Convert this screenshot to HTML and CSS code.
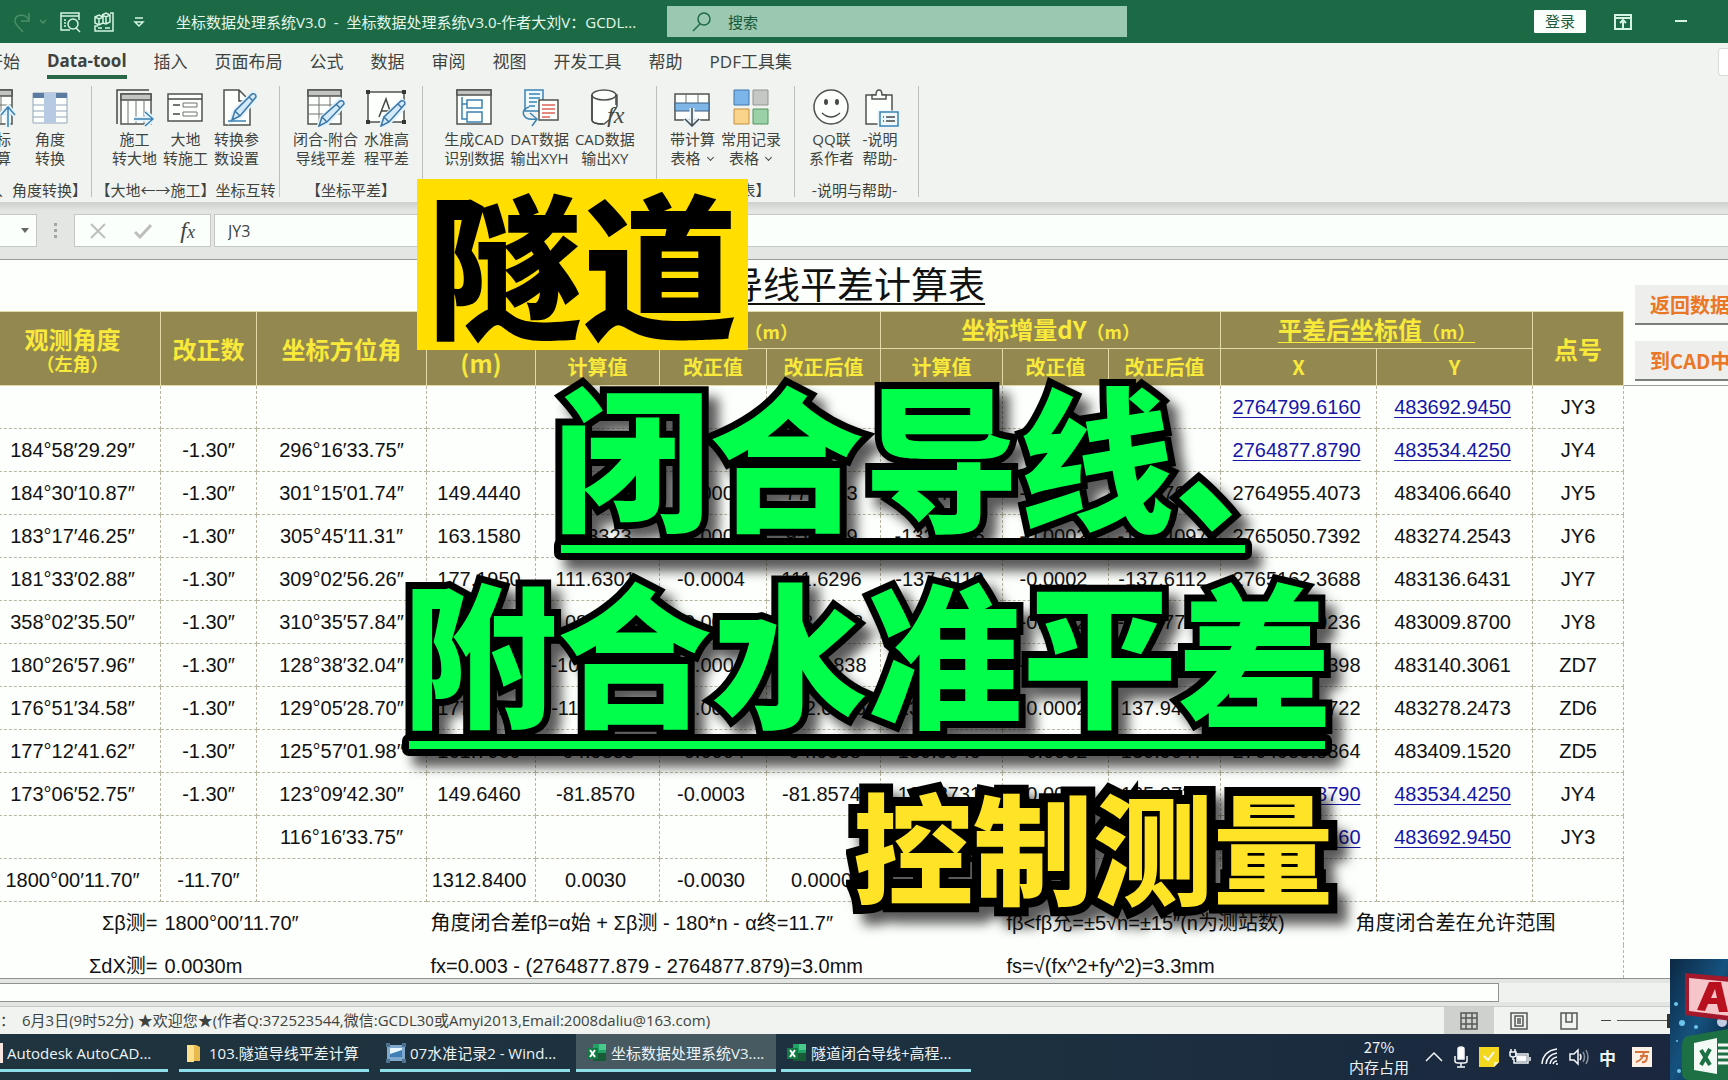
FILE: index.html
```html
<!DOCTYPE html>
<html lang="zh-CN">
<head>
  <meta charset="utf-8">
  <title>坐标数据处理系统V3.0</title>
  <link rel="stylesheet" href="styles.css">
</head>
<body>
  <header class="titlebar">
    <div class="quick">
      <svg class="faded" width="20" height="22" viewBox="0 0 20 22"><path d="M17 2v8H9M17 9C13 2 3 3 3 10c0 4 4 6 8 11"/></svg>
      <svg class="faded" width="8" height="8" viewBox="0 0 8 8"><path d="M1 2l3 3 3-3"/></svg>
      <svg width="22" height="22" viewBox="0 0 22 22"><path d="M20 9V2H2v17h9M2 5h18M5 9h2M5 12h2M5 15h2M17 17l4 4"/><circle cx="14" cy="13" r="5"/></svg>
      <svg width="22" height="22" viewBox="0 0 22 22"><path d="M5 15H2v5h18V2h-3M2 6l4-2 4 2v6l-4 2-4-2zM2 6l4 2 4-2M6 8v6M9 4l4-2 4 2v7l-4 2-3-1M9 4l4 2 4-2M13 6v7M5 17h4M12 17h5"/></svg>
      <svg class="more" width="12" height="12" viewBox="0 0 12 12"><path d="M2 2h8M2 6l4 4 4-4z"/></svg>
    </div>
    <div class="doc-title">坐标数据处理系统V3.0&nbsp; -&nbsp; 坐标数据处理系统V3.0-作者大刘V：GCDL...</div>
    <label class="search">
      <svg width="20" height="20" viewBox="0 0 20 20"><circle cx="12" cy="7" r="6"/><path d="M8 12l-7 7"/></svg>
      <input type="text" placeholder="搜索" aria-label="搜索">
    </label>
    <div class="window-tools">
      <button class="login">登录</button>
      <button class="plain" aria-label="功能区显示选项"><svg width="18" height="16" viewBox="0 0 18 16"><path d="M1 1h16v14H1zM1 4h16M9 15V7M6 9l3-3 3 3"/></svg></button>
      <button class="plain" aria-label="最小化"><svg width="14" height="16" viewBox="0 0 14 16"><path d="M1 7h12"/></svg></button>
    </div>
  </header>

  <section class="ribbon">
    <nav class="tabs">
      <button class="tab cut">开始</button>
      <button class="tab active">Data-tool</button>
      <button class="tab">插入</button>
      <button class="tab">页面布局</button>
      <button class="tab">公式</button>
      <button class="tab">数据</button>
      <button class="tab">审阅</button>
      <button class="tab">视图</button>
      <button class="tab">开发工具</button>
      <button class="tab">帮助</button>
      <button class="tab">PDF工具集</button>
      <span class="share"></span>
    </nav>
    <div class="groups">
      <div class="group g-angle">
        <div class="tools">
          <button class="tool"><svg width="40" height="38" viewBox="0 0 40 38"><path class="paper" d="M4 1h32v34H4z"/><path class="head" d="M4 1h32v6H4z"/><path class="thin" d="M14 7v28M25 7v28M4 16h32M4 25h32"/><path class="halo" d="M32 38V18M25 26l7-8 7 8"/><path class="blue" d="M32 38V18M25 26l7-8 7 8"/></svg>坐标<br>计算</button>
          <button class="tool"><svg width="40" height="38" viewBox="0 0 40 38"><path class="paper light" d="M3 4h34v30H3z"/><path d="M3 4h34v5H3z" fill="#5c7ba0"/><path class="light" d="M3 16h34M3 22h34M3 28h34"/><path d="M14 4h12v30H14z" fill="#b6cae4"/></svg>角度<br>转换</button>
        </div>
        <div class="group-name">【坐标计算、角度转换】</div>
      </div>
      <div class="group g-swap">
        <div class="tools">
          <button class="tool"><svg width="40" height="38" viewBox="0 0 40 38"><path class="line" d="M3 35V1h32"/><path class="paper" d="M7 5h30v30H7z"/><path class="head" d="M7 5h30v6H7z"/><path class="thin" d="M14 11v24M22 11v24M30 11v24"/><path class="halo" d="M20 30h18M31 23l8 7-8 8"/><path class="blue" d="M20 30h18M31 23l8 7-8 7"/></svg>施工<br>转大地</button>
          <button class="tool"><svg width="40" height="38" viewBox="0 0 40 38"><path class="paper" d="M3 5h34v27H3z"/><path class="line" d="M3 10h34M8 16h7M8 25h7"/><path class="thin" d="M18 14h14v4H18zM18 23h14v4H18z"/></svg>大地<br>转施工</button>
          <button class="tool"><svg width="40" height="38" viewBox="0 0 40 38"><path class="paper" d="M7 1h15l11 11v24H7z"/><path class="line" d="M22 1v11h11"/><path class="halo" d="M15 31l3-9L36 4l4 4-17 19z"/><path class="pen" d="M15 31l3-9L35 5q4-1 4 3L23 27zM18 22l5 5M32 8l4 4"/><path class="blue" d="M11 32h18"/></svg>转换参<br>数设置</button>
        </div>
        <div class="group-name">【大地←→施工】坐标互转</div>
      </div>
      <div class="group g-adjust">
        <div class="tools">
          <button class="tool"><svg width="40" height="38" viewBox="0 0 40 38"><path class="paper" d="M3 1h33v34H3z"/><path class="head" d="M3 1h33v6H3z"/><path class="thin" d="M14 7v28M25 7v28M3 16h33M3 25h33"/><path class="halo" d="M14 38l3-9L35 11l4 4-17 19z"/><path class="pen" d="M14 37l3-9L35 12q4-1 4 3L22 33zM17 28l5 5M31 15l4 4"/></svg>闭合-附合<br>导线平差</button>
          <button class="tool"><svg width="40" height="38" viewBox="0 0 40 38"><path class="paper" d="M2 3h36v30H2z"/><path class="line" d="M13 28l7-18 6 18M15 22h9"/><path class="dots" d="M0 1h4v4H0zM36 1h4v4h-4zM0 31h4v4H0zM36 31h4v4h-4z"/><path class="halo" d="M15 38l3-9L36 12l4 4-17 17z"/><path class="pen" d="M15 37l3-9L35 12q4-1 4 3L23 33zM18 28l5 5M32 15l4 4"/></svg>水准高<br>程平差</button>
        </div>
        <div class="group-name">【坐标平差】</div>
      </div>
      <div class="group g-cad">
        <div class="tools">
          <button class="tool"><svg width="40" height="38" viewBox="0 0 40 38"><path class="paper" d="M3 1h34v34H3z"/><path class="head" d="M3 1h34v5H3z"/><path class="blue" d="M8 8v22h5M8 15h5M13 11h15v8H13zM13 23h15v10H13z"/></svg>生成CAD<br>识别数据</button>
          <button class="tool"><svg width="40" height="38" viewBox="0 0 40 38"><path class="pale" d="M5 1h18v21H5z"/><path class="blue" d="M9 5h11M9 9h11M9 13h8M9 17h6"/><path class="paper" d="M19 11h19v20H19z"/><path class="red" d="M22 16h13M22 20h13M22 24h13M22 28h8"/><path class="curve" d="M9 18c-9 2-8 14 7 12M10 24l7 6-5 7"/></svg>DAT数据<br>输出XYH</button>
          <button class="tool"><svg width="40" height="38" viewBox="0 0 40 38"><path class="paper" d="M7 6v25c0 3 6 4 12 4l5-4 8-14V6z" stroke="none"/><ellipse class="paper" cx="19" cy="6" rx="12" ry="5"/><path class="line" d="M7 6v25c0 3 5 4 11 4M31 6v10"/><text x="22" y="34" class="fx-icon">fx</text></svg>CAD数据<br>输出XY</button>
        </div>
        <div class="group-name">【CAD数据】</div>
      </div>
      <div class="group g-forms">
        <div class="tools">
          <button class="tool"><svg width="40" height="38" viewBox="0 0 40 38"><path class="paper" d="M3 5h34v26H3z"/><path class="thin" d="M14 5v9M26 5v9"/><path d="M3 14h34v8H3z" fill="#7fb6e8" stroke="#3c5f80"/><path class="halo" d="M20 19v17M13 30l7 7 7-7"/><path class="line" d="M20 19v18M13 30l7 7 7-7"/></svg>带计算<br>表格<i class="drop"></i></button>
          <button class="tool"><svg width="40" height="38" viewBox="0 0 40 38"><path d="M3 1h15v15H3z" fill="#7cb5ea" stroke="#3f77ab"/><path d="M22 1h15v15H22z" fill="#c5c7c5" stroke="#939593"/><path d="M3 20h15v15H3z" fill="#fad48a" stroke="#c58f3e"/><path d="M22 20h15v15H22z" fill="#9bd1a7" stroke="#55955f"/></svg>常用记录<br>表格<i class="drop"></i></button>
        </div>
        <div class="group-name">【常用报表】</div>
      </div>
      <div class="group g-help">
        <div class="tools">
          <button class="tool"><svg width="40" height="38" viewBox="0 0 40 38"><circle class="paper" cx="20" cy="18" r="17"/><ellipse cx="15" cy="13" rx="2" ry="3"/><ellipse cx="26" cy="13" rx="2" ry="3"/><path class="line" d="M11 24q9 8 18 0"/></svg>QQ联<br>系作者</button>
          <button class="tool"><svg width="40" height="38" viewBox="0 0 40 38"><path class="paper" d="M6 6h26v29H6z"/><path class="paper" d="M12 6h4q0-5 3-5t3 5h4v4H12z"/><path class="halo" d="M20 24h18v13H20z"/><path class="pale" d="M20 23h18v14H20z"/><path class="line" d="M23 28h1M26 28h9M23 32h1M26 32h9"/></svg>-说明<br>帮助-</button>
        </div>
        <div class="group-name">-说明与帮助-</div>
      </div>
    </div>
  </section>

  <section class="formula-bar">
    <div class="name-box"><i></i></div>
    <span class="grip"></span>
    <div class="fx-box">
      <svg width="16" height="16" viewBox="0 0 16 16"><path d="M1 1l14 14M15 1L1 15"/></svg>
      <svg width="18" height="16" viewBox="0 0 18 16"><path class="tick" d="M1 9l5 5L17 2"/></svg>
      <em>f<small>x</small></em>
    </div>
    <input class="formula" type="text" value="JY3" aria-label="编辑栏">
  </section>

  <main class="sheet">
    <div class="sheet-main">
      <h1>附合导线平差计算表</h1>
      <table class="calc">
        <colgroup>
          <col class="w176"><col class="w96"><col class="w170"><col class="w109"><col class="w124"><col class="w107"><col class="w114"><col class="w122"><col class="w106"><col class="w112"><col class="w156"><col class="w156"><col class="w91">
        </colgroup>
        <thead>
          <tr>
            <th rowspan="2">观测角度<small>（左角）</small></th>
            <th rowspan="2">改正数</th>
            <th rowspan="2">坐标方位角</th>
            <th rowspan="2">边长<br>(m)</th>
            <th colspan="3">坐标增量dX<span>（m）</span></th>
            <th colspan="3">坐标增量dY<span>（m）</span></th>
            <th colspan="2"><u>平差后坐标值<span>（m）</span></u></th>
            <th rowspan="2">点号</th>
          </tr>
          <tr class="sub">
            <th>计算值</th><th>改正值</th><th>改正后值</th>
            <th>计算值</th><th>改正值</th><th>改正后值</th>
            <th>X</th><th>Y</th>
          </tr>
        </thead>
        <tbody>
          <tr><td></td><td></td><td></td><td></td><td></td><td></td><td></td><td></td><td></td><td></td><td><a href="#">2764799.6160</a></td><td><a href="#">483692.9450</a></td><td>JY3</td></tr>
          <tr><td>184°58′29.29″</td><td>-1.30″</td><td>296°16′33.75″</td><td></td><td></td><td></td><td></td><td></td><td></td><td></td><td><a href="#">2764877.8790</a></td><td><a href="#">483534.4250</a></td><td>JY4</td></tr>
          <tr><td>184°30′10.87″</td><td>-1.30″</td><td>301°15′01.74″</td><td>149.4440</td><td>77.5287</td><td>-0.0003</td><td>77.5283</td><td>-127.7608</td><td>-0.0002</td><td>-127.7610</td><td>2764955.4073</td><td>483406.6640</td><td>JY5</td></tr>
          <tr><td>183°17′46.25″</td><td>-1.30″</td><td>305°45′11.31″</td><td>163.1580</td><td>95.3323</td><td>-0.0004</td><td>95.3319</td><td>-132.4096</td><td>-0.0002</td><td>-132.4097</td><td>2765050.7392</td><td>483274.2543</td><td>JY6</td></tr>
          <tr><td>181°33′02.88″</td><td>-1.30″</td><td>309°02′56.26″</td><td>177.1950</td><td>111.6301</td><td>-0.0004</td><td>111.6296</td><td>-137.6110</td><td>-0.0002</td><td>-137.6112</td><td>2765162.3688</td><td>483136.6431</td><td>JY7</td></tr>
          <tr><td>358°02′35.50″</td><td>-1.30″</td><td>310°35′57.84″</td><td>166.9650</td><td>108.6552</td><td>-0.0004</td><td>108.6548</td><td>-126.7729</td><td>-0.0002</td><td>-126.7731</td><td>2765271.0236</td><td>483009.8700</td><td>JY8</td></tr>
          <tr><td>180°26′57.96″</td><td>-1.30″</td><td>128°38′32.04″</td><td>166.9380</td><td>-104.1834</td><td>-0.0004</td><td>-104.1838</td><td>130.4363</td><td>-0.0002</td><td>130.4361</td><td>2765166.8398</td><td>483140.3061</td><td>ZD7</td></tr>
          <tr><td>176°51′34.58″</td><td>-1.30″</td><td>129°05′28.70″</td><td>177.7320</td><td>-112.0672</td><td>-0.0004</td><td>-112.0676</td><td>137.9414</td><td>-0.0002</td><td>137.9412</td><td>2765054.7722</td><td>483278.2473</td><td>ZD6</td></tr>
          <tr><td>177°12′41.62″</td><td>-1.30″</td><td>125°57′01.98″</td><td>161.7060</td><td>-94.9355</td><td>-0.0004</td><td>-94.9358</td><td>130.9049</td><td>-0.0002</td><td>130.9047</td><td>2764959.8364</td><td>483409.1520</td><td>ZD5</td></tr>
          <tr><td>173°06′52.75″</td><td>-1.30″</td><td>123°09′42.30″</td><td>149.6460</td><td>-81.8570</td><td>-0.0003</td><td>-81.8574</td><td>125.2731</td><td>-0.0002</td><td>125.2730</td><td><a href="#">2764877.8790</a></td><td><a href="#">483534.4250</a></td><td>JY4</td></tr>
          <tr><td></td><td></td><td>116°16′33.75″</td><td></td><td></td><td></td><td></td><td></td><td></td><td></td><td><a href="#">2764799.6160</a></td><td><a href="#">483692.9450</a></td><td>JY3</td></tr>
          <tr><td>1800°00′11.70″</td><td>-11.70″</td><td></td><td>1312.8400</td><td>0.0030</td><td>-0.0030</td><td>0.0000</td><td></td><td></td><td></td><td></td><td></td><td></td></tr>
        </tbody>
        <tfoot>
          <tr><td class="label">Σβ测=</td><td colspan="2">1800°00′11.70″</td><td colspan="5">角度闭合差fβ=α始 + Σβ测 - 180*n - α终=11.7″</td><td colspan="2">fβ&lt;fβ允=±5√n=±15″(n为测站数)</td><td class="verdict" colspan="3">角度闭合差在允许范围</td></tr>
          <tr><td class="label">ΣdX测=</td><td colspan="2">0.0030m</td><td colspan="5">fx=0.003 - (2764877.879 - 2764877.879)=3.0mm</td><td colspan="2">fs=√(fx^2+fy^2)=3.3mm</td><td colspan="3"></td></tr>
        </tfoot>
      </table>
    </div>
    <aside class="macros">
      <button>返回数据表</button>
      <button>到CAD中绘图</button>
    </aside>
  </main>

  <div class="scroll-row"><div class="thumb"></div><div class="track"></div></div>

  <footer class="statusbar">
    <div class="message"><span>时间：</span>6月3日(9时52分) ★欢迎您★(作者Q:372523544,微信:GCDL30或Amyi2013,Email:2008daliu@163.com)</div>
    <div class="views">
      <button class="on" aria-label="普通"><svg width="18" height="18" viewBox="0 0 18 18"><path d="M1 1h16v16H1zM6 1v16M12 1v16M1 6h16M1 12h16"/></svg></button>
      <button aria-label="页面布局"><svg width="18" height="18" viewBox="0 0 18 18"><path d="M1 1h16v16H1zM5 4h8v10H5zM7 7h4M7 9h4M7 11h4"/></svg></button>
      <button aria-label="分页预览"><svg width="18" height="18" viewBox="0 0 18 18"><path d="M1 1h16v16H1zM6 1v9h6V1"/></svg></button>
    </div>
    <div class="zoom"><i></i><b></b></div>
  </footer>

  <div class="taskbar">
    <div class="tasks">
      <button class="task first"><i></i>Autodesk AutoCAD...</button>
      <button class="task"><svg width="18" height="20" viewBox="0 0 18 20"><path d="M2 2h9l4 2v14H2z" fill="#e8b94c"/><path d="M2 2h7v17H2z" fill="#ffe08a"/></svg><span class="folder">103.隧道导线平差计算</span></button>
      <button class="task"><svg width="20" height="20" viewBox="0 0 20 20"><path d="M1 2h18v16H1z" fill="#7fa9cc"/><path d="M4 5h12v9H4z" fill="#e9f6ff"/><path d="M4 11l12-4v7H4z" fill="#3f7fb5"/><path d="M0 0h4v4H0zM16 0h4v4h-4zM0 16h4v4H0zM16 16h4v4h-4z" fill="#4d7191"/></svg>07水准记录2 - Wind...</button>
      <button class="task current"><svg width="20" height="20" viewBox="0 0 20 20"><path d="M6 1h13v17H6z" fill="#21a366"/><path d="M12 1h7v6h-7z" fill="#4bc88c"/><path d="M6 10h13v8H6z" fill="#185c37"/><path d="M0 5h11v11H0z" fill="#107c41"/><path d="M3 7l5 7M8 7l-5 7" stroke="#fff" stroke-width="2"/></svg>坐标数据处理系统V3....</button>
      <button class="task"><svg width="20" height="20" viewBox="0 0 20 20"><path d="M6 1h13v17H6z" fill="#21a366"/><path d="M12 1h7v6h-7z" fill="#4bc88c"/><path d="M6 10h13v8H6z" fill="#185c37"/><path d="M0 5h11v11H0z" fill="#107c41"/><path d="M3 7l5 7M8 7l-5 7" stroke="#fff" stroke-width="2"/></svg>隧道闭合导线+高程...</button>
    </div>
    <div class="tray">
      <div class="memory">27%<br>内存占用</div>
      <svg width="18" height="20" viewBox="0 0 18 20"><path d="M1 14l8-8 8 8"/></svg>
      <svg width="16" height="22" viewBox="0 0 16 22"><path d="M5 3q0-2 3-2t3 2v10H5z" fill="#fff"/><path d="M2 10v5q0 2 3 2h6q3 0 3-2v-5M8 17v4M4 21h8"/></svg>
      <svg width="20" height="20" viewBox="0 0 20 20"><path d="M0 0h20v15l-5 5H0z" fill="#f3d81f" stroke="none"/><path d="M15 20v-5h5z" fill="#fff7a8" stroke="none"/><path d="M5 9l4 4 6-8" stroke-width="2"/></svg>
      <svg width="22" height="18" viewBox="0 0 22 18"><path d="M6 6h13v9H5v-4"/><path d="M8 8h9v5H8z" fill="#fff"/><path d="M21 9v4M1 4h6v3q0 2-3 2t-3-2zM2 1v3M6 1v3M4 9v3"/></svg>
      <svg width="18" height="18" viewBox="0 0 18 18"><path d="M1 16Q2 3 16 1M5 16q1-9 11-11M9 16q1-6 7-7M12 16q1-3 4-3M15 16h2"/></svg>
      <svg width="20" height="18" viewBox="0 0 20 18"><path d="M1 6h4l4-4v14l-4-4H1zM11 6q2 3 0 6"/><path d="M14 4q3 5 0 10M17 2q4 7 0 14" opacity=".5"/></svg>
      <span class="ime">中</span>
      <svg width="20" height="20" viewBox="0 0 20 20"><path d="M0 0h20v20H0z" fill="#fdf1e6" stroke="none"/><path d="M3 5h14M12 5q-1 8-8 10M8 9h7q0 7-5 6" stroke="#d9723c" stroke-width="2"/></svg>
    </div>
  </div>

  <svg class="badge" width="58" height="121" viewBox="0 0 58 121">
    <defs><linearGradient id="night" x1="0" y1="0" x2="1" y2="1"><stop offset="0" stop-color="#0c2944"/><stop offset=".5" stop-color="#15527f"/><stop offset="1" stop-color="#061b30"/></linearGradient></defs>
    <path d="M0 0h58v121H0z" fill="url(#night)"/>
    <g fill="#6fc4ee"><circle cx="6" cy="45" r="2"/><circle cx="12" cy="64" r="3"/><circle cx="7" cy="82" r="1"/><circle cx="26" cy="68" r="2"/><circle cx="9" cy="112" r="2"/><circle cx="32" cy="117" r="2"/><circle cx="52" cy="63" r="5" fill="#c2cce0"/></g>
    <path d="M15 14l46 4v44l-46-6z" fill="#a3182a"/>
    <path d="M19 19l42 4v34l-42-5z" fill="#f5c5c9"/>
    <path d="M27 51l12-28h12l7 30h-9l-2-8H38l-3 7zM41 39h6l-2-9z" fill="#b8101f"/>
    <path d="M18 77l40-7v51H18q-6 0-6-7V86q0-8 6-9z" fill="#1d7044"/>
    <path d="M24 84l23-5v36l-23-4z" fill="#f3faf5"/>
    <path d="M31 91l9 15M40 90l-9 16" stroke="#1d7044" stroke-width="4"/>
    <path d="M48 86h10M48 92h10M48 98h10M48 104h10" stroke="#f3faf5" stroke-width="3"/>
  </svg>

  <div class="tag">隧道</div>
  <div class="caption caption-one">闭合导线、</div>
  <div class="caption caption-two">附合水准平差</div>
  <div class="caption caption-three">控制测量</div>
</body>
</html>
```

FILE: styles.css
```css
*,
*::after {
  box-sizing: border-box;
}

body {
  margin: 0;
  height: 100vh;
  display: flex;
  flex-direction: column;
  position: relative;
  overflow: hidden;
  background: #fdfffc;
  font-family: "Open Sans", "Noto Sans CJK SC", sans-serif;
  font-size: 15px;
  color: #3f4340;
}

button, input {
  font: inherit;
  color: inherit;
  border: none;
  background: none;
  padding: 0;
  margin: 0;
  white-space: nowrap;
}

svg {
  flex: none;
}

/* title bar */
.titlebar {
  height: 43px;
  flex: none;
  display: flex;
  align-items: center;
  background: #1c6a45;
  color: #e4f7ec;
}

.titlebar svg {
  fill: none;
  stroke: #d4f3e2;
  stroke-width: 2;
}

.quick {
  width: 176px;
  padding-left: 12px;
  display: flex;
  align-items: center;
  gap: 12px;
}

.titlebar .quick svg {
  stroke-width: 1.5;
}

.titlebar .quick .faded {
  stroke: #4b8f6d;
  margin-right: -5px;
}

.quick .faded + svg:not(.faded) {
  margin-left: 5px;
}

.quick .more {
  margin-left: 6px;
}

.doc-title {
  width: 491px;
  white-space: nowrap;
}

.search {
  width: 460px;
  height: 31px;
  padding-left: 25px;
  display: flex;
  align-items: center;
  gap: 16px;
  background: #9ac8b0;
}

.titlebar .search svg {
  stroke: #1c6a45;
  stroke-width: 1.5;
}

.search input {
  flex: 1;
}

.search input::placeholder {
  color: #15593a;
}

.window-tools {
  flex: 1;
  display: flex;
  justify-content: flex-end;
  align-items: center;
  gap: 28px;
  padding-right: 40px;
}

.window-tools svg {
  display: block;
}

.window-tools .plain + .plain {
  margin-left: 14px;
}

.login {
  width: 52px;
  height: 23px;
  line-height: 23px;
  background: #fafffc;
  color: #1c5a3d;
  border-radius: 1px;
}

/* ribbon */
.ribbon {
  height: 159px;
  flex: none;
  background: #f0f3ef;
}

.tabs {
  height: 43px;
  display: flex;
  gap: 27px;
  align-items: flex-start;
  overflow: hidden;
  font-size: 17px;
}

.tab {
  height: 36px;
  line-height: 38px;
}

.tab.cut {
  margin-left: -14px;
}

.tab.active {
  line-height: 36px;
  font-weight: bold;
  border-bottom: 4px solid #2a6648;
}

.share {
  width: 10px;
  height: 28px;
  margin: 5px 0 0 auto;
  background: #fff;
  border: 1px solid #d8dcd8;
  border-right: none;
  border-radius: 4px 0 0 4px;
}

.groups {
  display: flex;
  height: 111px;
}

.group {
  flex: none;
  display: flex;
  flex-direction: column;
  justify-content: space-between;
  align-items: center;
  border-right: 1px solid #bcbfbb;
}

.g-angle {
  width: 92px;
  align-items: flex-end;
  padding-right: 4px;
}

.g-angle .tools {
  gap: 14px;
  padding-right: 17px;
}

.g-swap { width: 188px; }
.g-adjust { width: 143px; }
.g-cad { width: 234px; }
.g-forms { width: 138px; }
.g-help { width: 124px; padding-right: 4px; }

.tools {
  display: flex;
  gap: 6px;
  padding-top: 3px;
}

.tool {
  min-width: 40px;
  line-height: 19px;
  text-align: center;
}

.tool svg {
  display: block;
  margin: 0 auto 3px;
  fill: #454845;
}

.tool .paper { fill: #fdfffd; stroke: #50534f; stroke-width: 1.5; }
.tool .light { stroke: #93a5b8; stroke-width: 1; }
.tool .head { fill: #c3c5c2; stroke: #50534f; stroke-width: 1.5; }
.tool .thin { fill: none; stroke: #70736f; }
.tool .line { fill: none; stroke: #454845; stroke-width: 1.5; }
.tool .halo { fill: none; stroke: #e3f3fc; stroke-width: 5; }
.tool .blue,
.tool .curve { fill: none; stroke: #3b82b3; stroke-width: 1.5; }
.tool .red { fill: none; stroke: #dc6358; stroke-width: 1.5; }
.tool .pen { fill: #d3eafa; stroke: #3b76a5; stroke-width: 1.5; }
.tool .pale { fill: #edf8ff; stroke: #3b82b3; stroke-width: 1.5; }
.tool .dots { fill: #353835; }

.fx-icon {
  font: italic 24px "Liberation Serif", serif;
}

.drop {
  display: inline-block;
  width: 5px;
  height: 5px;
  margin: 0 2px 4px 7px;
  border: solid #454845;
  border-width: 0 1px 1px 0;
  transform: rotate(45deg);
}

.group-name {
  height: 15px;
  line-height: 15px;
  white-space: nowrap;
  font-family: "Noto Sans CJK SC", sans-serif;
}

/* formula bar */
.formula-bar {
  height: 58px;
  flex: none;
  display: flex;
  align-items: center;
  background: linear-gradient(#cdd0cd, #e4e6e3 9px);
  border-bottom: 1px solid #9a9c99;
}

.name-box, .fx-box, .formula {
  height: 33px;
  background: #fbfffb;
  border: 1px solid #c4c7c3;
}

.name-box {
  width: 37px;
  border-left: none;
  display: flex;
  align-items: center;
  justify-content: flex-end;
  padding-right: 7px;
}

.name-box i {
  border: 4px solid transparent;
  border-top: 5px solid #666;
  border-bottom: none;
}

.grip {
  height: 15px;
  margin: 0 17px;
  border-left: 3px dotted #a3a5a2;
}

.fx-box {
  width: 137px;
  margin-right: 3px;
  padding: 0 15px;
  display: flex;
  align-items: center;
  justify-content: space-between;
}

.fx-box svg {
  fill: none;
  stroke: #bdbfbc;
  stroke-width: 2;
}

.fx-box .tick {
  stroke-width: 3;
}

.fx-box em {
  font: italic 24px "Liberation Serif", serif;
  color: #444;
}

.fx-box small {
  font-size: 18px;
}

.formula {
  flex: 1;
  padding-left: 13px;
  border-right: none;
  font-size: 16px;
}

/* worksheet */
.sheet {
  flex: 1;
  min-height: 0;
  overflow: hidden;
  display: flex;
  font-family: "Liberation Sans", "Noto Sans CJK SC", sans-serif;
  font-size: 20px;
  color: #111;
}

.sheet-main {
  flex: none;
  margin-left: -16px;
}

h1 {
  margin: 0;
  height: 51px;
  line-height: 47px;
  padding-right: 639px;
  text-align: right;
  font-family: "Noto Sans CJK SC", sans-serif;
  font-size: 37px;
  font-weight: normal;
  text-decoration: underline;
  text-decoration-thickness: 2px;
  text-underline-offset: 4px;
}

.calc {
  width: 1639px;
  table-layout: fixed;
  border-collapse: collapse;
}

.w176 { width: 176px; }
.w96 { width: 96px; }
.w170 { width: 170px; }
.w109 { width: 109px; }
.w124 { width: 124px; }
.w107 { width: 107px; }
.w114 { width: 114px; }
.w122 { width: 122px; }
.w106 { width: 106px; }
.w112 { width: 112px; }
.w156 { width: 156px; }
.w91 { width: 91px; }

.calc th {
  height: 37px;
  padding: 0;
  background: #93884f;
  color: #f8e93a;
  border: 1px solid #e2dba8;
  font-family: "Noto Sans CJK SC", sans-serif;
  font-size: 24px;
  line-height: 28px;
  white-space: nowrap;
}

.calc th small {
  display: block;
  font-size: 18px;
  line-height: 20px;
}

.calc th span {
  font-size: 18px;
}

.calc th u {
  text-decoration-thickness: 1px;
  text-underline-offset: 3px;
}

.calc .sub th {
  font-size: 20px;
}

.calc td {
  height: 43px;
  padding: 0;
  border: 1px dashed #b9b6a2;
  text-align: center;
  white-space: nowrap;
}

.calc tbody td:nth-child(n+4):nth-child(-n+12) {
  padding-right: 4px;
}

.calc a {
  color: #1616a8;
  text-decoration-thickness: 1px;
  text-underline-offset: 3px;
}

.calc tfoot td {
  border-width: 0;
  padding-left: 4px;
  text-align: left;
  line-height: 28px;
}

.calc tfoot td:last-child {
  border-right-width: 1px;
}

.calc tfoot .label {
  text-align: right;
  padding-right: 3px;
}

.calc tfoot .verdict {
  padding-left: 135px;
}

.macros {
  flex: 1;
  min-width: 0;
  height: 126px;
  padding: 25px 0 0 11px;
  display: flex;
  flex-direction: column;
  gap: 16px;
  border-bottom: 1px solid #9a9c99;
}

.macros button {
  width: 148px;
  height: 40px;
  flex: none;
  padding-left: 15px;
  text-align: left;
  background: #eeefed;
  border-bottom: 2px solid #7b7d7a;
  color: #ea7726;
  font-family: "Noto Sans CJK SC", sans-serif;
  font-weight: bold;
}

/* bottom bars */
.scroll-row {
  height: 29px;
  flex: none;
  display: flex;
  padding: 4px 0;
  background: #e3e5e2;
  border-top: 1px solid #8f928e;
  border-bottom: 1px solid #c9cbc8;
}

.thumb {
  flex: 1;
  background: #fdfffd;
  border: 1px solid #8f928e;
  border-left: none;
}

.track {
  width: 229px;
  background: #f0f2f0;
}

.statusbar {
  height: 27px;
  flex: none;
  display: flex;
  justify-content: space-between;
  background: #f0f3ef;
}

.message {
  line-height: 26px;
  white-space: nowrap;
}

.message span {
  margin-left: -30px;
  margin-right: 7px;
}

.views {
  display: flex;
  margin-left: auto;
}

.views button {
  width: 50px;
  display: flex;
  align-items: center;
  justify-content: center;
}

.views .on {
  background: #cfd1cf;
}

.views svg {
  fill: none;
  stroke: #555855;
  stroke-width: 1.5;
}

.zoom {
  width: 134px;
  padding-left: 7px;
  display: flex;
  align-items: center;
  gap: 6px;
}

.zoom i {
  width: 10px;
  height: 1px;
  background: #444;
}

.zoom b {
  width: 54px;
  height: 14px;
  border-right: 4px solid #333;
  background: linear-gradient(#555, #555) center / 100% 1px no-repeat;
}

.taskbar {
  height: 46px;
  flex: none;
  display: flex;
  justify-content: space-between;
  background: linear-gradient(90deg, #1f343e, #1c3040 60%, #1a263e);
  color: #eef4f6;
}

.tasks {
  display: flex;
  gap: 11px;
}

.task {
  width: 190px;
  height: 38px;
  display: flex;
  align-items: center;
  gap: 4px;
  padding-left: 6px;
  padding-top: 2px;
  border-bottom: 3px solid #8edfea;
}

.task .folder {
  margin-left: 2px;
}

.task.first {
  width: 168px;
  padding-left: 0;
}

.task.first i {
  width: 3px;
  height: 20px;
  background: #f7e6e0;
}

.task.current {
  width: 200px;
  padding-left: 11px;
  margin: 0 -6px 0 -5px;
  background: #475a62;
}

.tray {
  display: flex;
  align-items: center;
  gap: 10px;
  padding-right: 76px;
  font-family: "Noto Sans CJK SC", sans-serif;
}

.tray svg {
  fill: none;
  stroke: #f4f8fa;
  stroke-width: 1.5;
}

.memory {
  margin-right: 6px;
  text-align: center;
  line-height: 20px;
}

.ime {
  margin-right: 6px;
  font-size: 17px;
  font-weight: bold;
}

/* picture badge and captions that float over the workbook */
.badge {
  position: absolute;
  right: 0;
  bottom: 0;
}

.tag {
  position: absolute;
  left: 417px;
  top: 179px;
  width: 331px;
  height: 171px;
  line-height: 160px;
  text-align: center;
  background: #ffde00;
  color: #000;
  font-family: "Noto Sans CJK SC", sans-serif;
  font-size: 155px;
  font-weight: 900;
}

.caption {
  position: absolute;
  font-family: "Noto Sans CJK SC", sans-serif;
  font-size: 155px;
  line-height: 160px;
  font-weight: 900;
  white-space: nowrap;
  color: #00ff4a;
  -webkit-text-stroke: 14px #000;
  paint-order: stroke fill;
  stroke-linejoin: round;
  filter: drop-shadow(10px 11px 6px rgba(0, 0, 0, 0.65));
}

.caption-one,
.caption-two {
  padding-bottom: 28px;
}

.caption-one::after,
.caption-two::after {
  content: "";
  position: absolute;
  left: 0;
  right: 0;
  bottom: 0;
  height: 22px;
  background: #00ff4a;
  border: 7px solid #000;
  border-radius: 7px;
}

.caption-one {
  left: 554px;
  top: 372px;
  font-feature-settings: "halt";
}

.caption-two {
  left: 402px;
  top: 568px;
}

.caption-three {
  left: 853px;
  top: 764px;
  font-size: 120px;
  color: #ffe326;
  -webkit-text-stroke-width: 18px;
}
```
